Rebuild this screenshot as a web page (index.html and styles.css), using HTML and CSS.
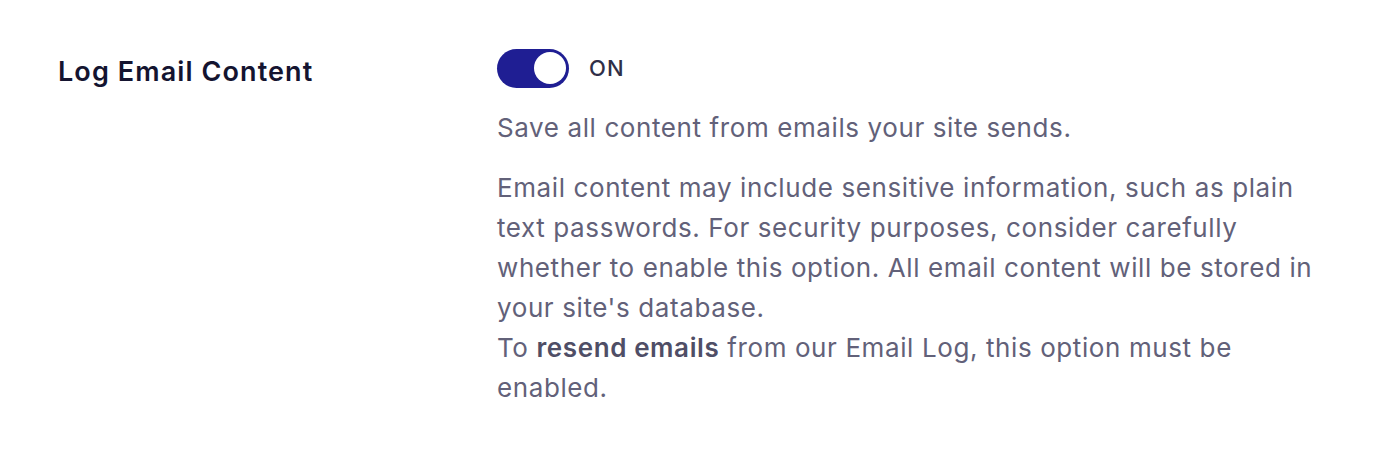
FILE: index.html
```html
<!DOCTYPE html>
<html>
<head>
    <title>Log Email Content</title>
    <link rel="stylesheet" href="styles.css">
</head>
<body>
    <div class="setting-row">
        <div class="setting-label">Log Email Content</div>

        <div class="setting-field">
            <div class="toggle-wrap">
                <span class="toggle">
                    <span class="knob"></span>
                </span>
                <span class="toggle-state">ON</span>
            </div>

            <p class="desc">Save all content from emails your site sends.</p>

            <p class="desc">
                Email content may include sensitive information, such as plain text passwords. For security purposes, consider carefully whether to enable this option. All email content will be stored in your site's database.<br>
                To <strong>resend emails</strong> from our Email Log, this option must be enabled.
            </p>
        </div>
    </div>
</body>
</html>
```

FILE: styles.css
```css
body {
    font-family: Inter, "Noto Sans", sans-serif;
    background: #ffffff;
    margin: 0;
}
.setting-row {
    display: flex;
    padding: 48px 58px;
}
.setting-label {
    width: 439px;
    flex-shrink: 0;
    font-size: 27px;
    font-weight: 600;
    letter-spacing: 1.1px;
    color: #141430;
    line-height: 48px;
}
.setting-field {
    width: 826px;
}
.toggle-wrap {
    display: flex;
    align-items: center;
    gap: 20px;
    height: 40px;
}
.toggle {
    display: flex;
    justify-content: flex-end;
    align-items: center;
    width: 72px;
    height: 39px;
    box-sizing: border-box;
    padding: 3px;
    border-radius: 20px;
    background: #1f1e93;
}
.knob {
    width: 32px;
    height: 32px;
    border-radius: 50%;
    background: #ffffff;
}
.toggle-state {
    font-size: 22px;
    font-weight: 500;
    letter-spacing: 1.2px;
    color: #2f2f48;
}
.desc {
    margin: 20px 0 0;
    font-size: 26px;
    line-height: 40px;
    letter-spacing: 0.6px;
    color: #626179;
}
.desc strong {
    font-weight: 600;
    color: #4f4e66;
}
```
